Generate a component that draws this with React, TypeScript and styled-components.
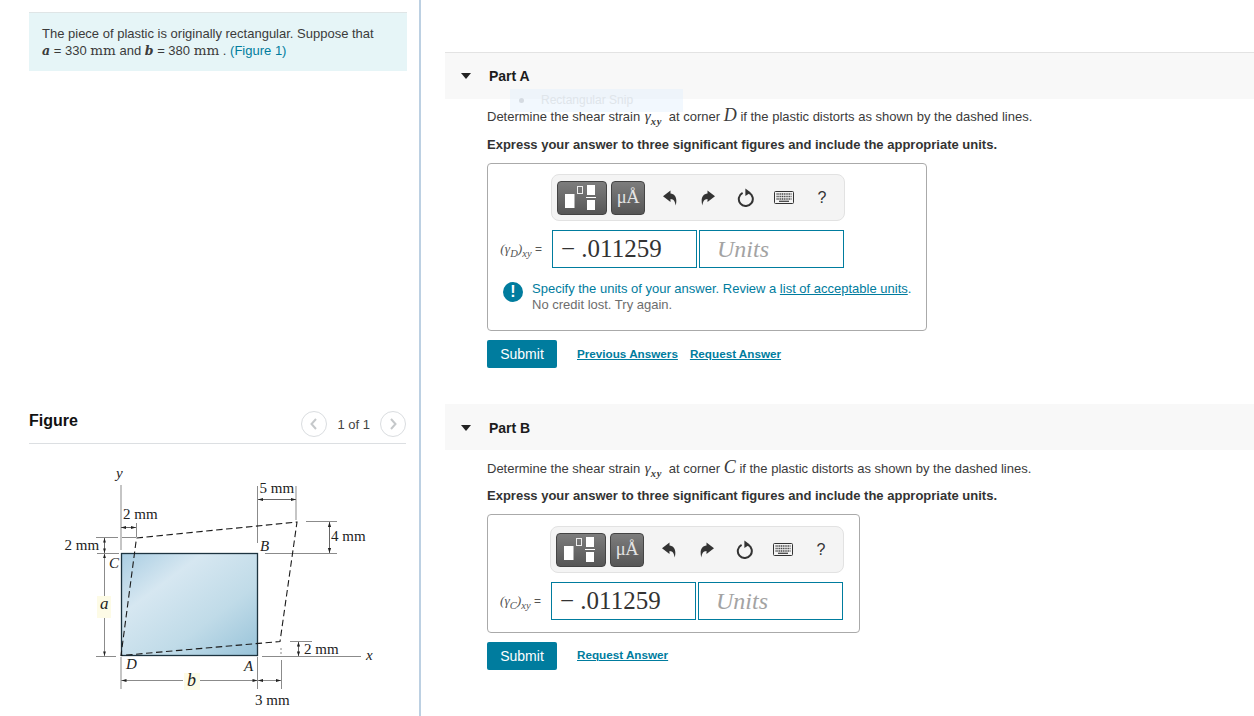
import React from "react";
import styled, { createGlobalStyle } from "styled-components";

const Global = createGlobalStyle`
  html, body { margin: 0; padding: 0; background: #fff; }
  body { font-family: "Liberation Sans", Arial, sans-serif; font-size: 13px; color: #333; overflow: hidden; }
`;

const Page = styled.div`
  position: relative;
  display: flex;
  width: 1254px;
  height: 716px;
  overflow: hidden;
`;
const LeftPane = styled.div`
  width: 421px;
  height: 716px;
  flex: none;
  padding-top: 12px;
  box-sizing: border-box;
  border-right: 2px solid #bcd0e2;
`;
const Intro = styled.div`
  margin: 0 12px 0 29px;
  height: 59px;
  box-sizing: border-box;
  padding: 13px 13px 0;
  background: #e6f5f7;
  border-top: 1px solid #dfe5e6;
  font-size: 13px;
  line-height: 16px;
  color: #3b3b3b;
  white-space: nowrap;
`;
const MathI = styled.i`
  font-family: "DejaVu Serif", "Liberation Serif", serif;
  font-weight: 700;
  font-size: 12.5px;
`;
const MathU = styled.span`
  font-family: "DejaVu Serif", "Liberation Serif", serif;
  font-size: 13.5px;
`;
const Link = styled.a`
  color: #007c9e;
`;
const FigureHead = styled.div`
  margin: 333px 13px 0 29px;
  height: 40px;
  box-sizing: border-box;
  border-bottom: 1px solid #dcdfe2;
  display: flex;
  align-items: flex-start;
  justify-content: space-between;
`;
const FigureTitle = styled.div`
  font-size: 16px;
  font-weight: 700;
  color: #111;
  line-height: 33px;
`;
const Pager = styled.div`
  display: flex;
  align-items: center;
  gap: 10px;
  height: 26px;
  margin-top: 7px;
  font-size: 13px;
  color: #444;
`;
const PagerButton = styled.span`
  width: 24px;
  height: 24px;
  border: 1px solid #dadde0;
  border-radius: 50%;
  display: flex;
  align-items: center;
  justify-content: center;
`;
const Figure = styled.svg`
  display: block;
  margin-top: 6px;
  width: 419px;
  height: 266px;
`;

const RightPane = styled.div`
  flex: 1;
  padding: 52px 0 0 24px;
`;
const PartBlock = styled.section<{ $after: number }>`
  margin-bottom: ${(p) => p.$after}px;
`;
const PartHeader = styled.div<{ $line: boolean }>`
  height: ${(p) => (p.$line ? 47 : 46)}px;
  box-sizing: border-box;
  background: #f8f8f8;
  border-top: 1px solid ${(p) => (p.$line ? "#e3e3e3" : "#f8f8f8")};
  display: flex;
  align-items: center;
  padding-left: 16px;
  font-weight: 700;
  font-size: 14px;
  color: #1c1c1c;
`;
const Caret = styled.span`
  width: 0;
  height: 0;
  margin-right: 18px;
  border-left: 5.5px solid transparent;
  border-right: 5.5px solid transparent;
  border-top: 6px solid #222;
`;
const PartBody = styled.div`
  padding-left: 42px;
`;
const Question = styled.div<{ $top: number }>`
  padding-top: ${(p) => p.$top}px;
  height: 20px;
  line-height: 20px;
  font-size: 13px;
  color: #3b3b3b;
  white-space: nowrap;
`;
const Gamma = styled.i`
  font-family: "Liberation Serif", serif;
  font-size: 15px;
  margin: 0 3px 0 1px;
  sub { font-size: 10.5px; font-weight: 700; line-height: 0; letter-spacing: 0.8px; }
`;
const Corner = styled.i`
  font-family: "Liberation Serif", serif;
  font-size: 18px;
`;
const Instruction = styled.div<{ $top: number }>`
  margin-top: ${(p) => p.$top}px;
  height: 20px;
  line-height: 20px;
  font-weight: 700;
  font-size: 13px;
  color: #333;
`;
const AnswerBox = styled.div<{ $w: number; $top: number; $bottom: number }>`
  margin-top: 8px;
  width: ${(p) => p.$w}px;
  box-sizing: border-box;
  border: 1px solid #aaa;
  border-radius: 4px;
  padding: ${(p) => p.$top}px 0 ${(p) => p.$bottom}px;
`;
const Toolbar = styled.div<{ $indent: number }>`
  margin-left: ${(p) => p.$indent}px;
  width: 294px;
  height: 47px;
  box-sizing: border-box;
  background: #f4f4f4;
  border: 1px solid #e2e2e2;
  border-radius: 8px;
  display: flex;
  align-items: center;
  padding-left: 5px;
  gap: 4px;
`;
const ToolButton = styled.span<{ $w: number }>`
  width: ${(p) => p.$w}px;
  height: 34px;
  flex: none;
  box-sizing: border-box;
  background: linear-gradient(#7d7d7d, #565656);
  border: 1px solid #444;
  border-radius: 4px;
  display: flex;
  align-items: center;
  justify-content: center;
  color: #e4e4e4;
  font-family: "Liberation Serif", serif;
  font-size: 18.5px;
  letter-spacing: -0.5px;
`;
const ToolIcons = styled.div`
  display: flex;
  margin-left: 2px;
`;
const ToolIcon = styled.span`
  width: 38px;
  display: flex;
  align-items: center;
  justify-content: center;
  font-size: 16px;
  color: #333;
`;
const EqRow = styled.div`
  display: flex;
  align-items: center;
  margin-top: 9px;
`;
const EqLabel = styled.span<{ $w: number }>`
  width: ${(p) => p.$w}px;
  box-sizing: border-box;
  padding-right: 10px;
  text-align: right;
  flex: none;
  font-family: "Liberation Serif", serif;
  font-style: italic;
  font-size: 13.5px;
  color: #555;
  white-space: nowrap;
  sub { font-size: 10.5px; line-height: 0; }
  b { font-family: "Liberation Sans", sans-serif; font-size: 12px; font-style: normal; font-weight: 400; }
`;
const Field = styled.div<{ $empty?: boolean }>`
  width: 145px;
  height: 38px;
  box-sizing: border-box;
  border: 1px solid #007c9e;
  margin-right: 2px;
  display: flex;
  align-items: center;
  padding-left: ${(p) => (p.$empty ? 17 : 8)}px;
  font-family: "Liberation Serif", serif;
  font-size: ${(p) => (p.$empty ? 24 : 25)}px;
  font-style: ${(p) => (p.$empty ? "italic" : "normal")};
  color: ${(p) => (p.$empty ? "#a3a3a3" : "#333")};
  white-space: pre;
`;
const Feedback = styled.div`
  display: flex;
  margin: 13px 0 0 15px;
  line-height: 16px;
  font-size: 13px;
  white-space: nowrap;
`;
const AlertDot = styled.span`
  width: 20px;
  height: 20px;
  flex: none;
  margin: 1px 9px 0 0;
  border-radius: 50%;
  background: #007c9e;
  color: #fff;
  font-weight: 700;
  font-size: 16px;
  line-height: 20px;
  text-align: center;
`;
const FeedbackMain = styled.div`
  color: #007c9e;
  a { color: #007c9e; text-decoration: underline; }
`;
const FeedbackSub = styled.div`
  color: #6d6d6d;
`;
const Actions = styled.div`
  display: flex;
  margin-top: 9px;
  align-items: flex-start;
`;
const Submit = styled.button`
  width: 70px;
  height: 28px;
  border: 0;
  border-radius: 2px;
  background: #007c9e;
  color: #fff;
  font: 400 14px "Liberation Sans", sans-serif;
  padding: 0;
`;
const ActionLinks = styled.div<{ $top: number }>`
  display: flex;
  gap: 12px;
  margin: ${(p) => p.$top}px 0 0 20px;
  line-height: 14px;
  font-size: 11.7px;
  font-weight: 700;
  a { color: #007c9e; text-decoration: underline; }
`;
const Ghost = styled.div`
  position: absolute;
  left: 510px;
  top: 89px;
  width: 173px;
  height: 23px;
  box-sizing: border-box;
  padding-left: 31px;
  background: rgba(226, 240, 253, 0.45);
  color: #dfe5ea;
  font-size: 12px;
  line-height: 22px;
  &::before {
    content: "";
    position: absolute;
    left: 9px;
    top: 9px;
    width: 5px;
    height: 5px;
    border-radius: 50%;
    background: #d5dbe2;
  }
`;

const Chevron = ({ d }: { d: string }) => (
  <svg width="10" height="14" viewBox="0 0 10 14" fill="none" stroke="#c5c8ca" strokeWidth="2">
    <path d={d} />
  </svg>
);

const TemplateGlyph = () => (
  <svg width="48" height="32" viewBox="1 1 48 32">
    <rect x="8" y="13" width="9.5" height="14" fill="#fff" />
    <rect x="20.5" y="5.5" width="5" height="7" fill="none" stroke="#eee" strokeWidth="1" />
    <rect x="30" y="4" width="8" height="10" fill="#fff" />
    <rect x="29" y="16" width="10" height="1" fill="#fff" />
    <rect x="30" y="19" width="8" height="10" fill="#fff" />
  </svg>
);
const Undo = ({ flip }: { flip?: boolean }) => (
  <svg width="14" height="16" viewBox="0 0 14 16" transform={flip ? "scale(-1 1)" : undefined} fill="#333">
    <path d="M0 6.2 L7.5 0.5 V3.6 C12.5 4 14.6 9 12.6 15.5 C12 11.5 11 9.2 7.5 9 V12 Z" />
  </svg>
);
const Reload = () => (
  <svg width="18" height="19" viewBox="0 0 18 19" fill="none">
    <path d="M11.6 4.6 A7 7 0 1 1 5.6 4.8" stroke="#333" strokeWidth="2" />
    <path d="M8.4 0.6 L13.8 4.6 L8.4 8 Z" fill="#333" />
  </svg>
);
const Keyboard = () => (
  <svg width="20" height="13" viewBox="0 0 20 13">
    <rect x="0.5" y="0.5" width="19" height="12" rx="1" fill="#f4f4f4" stroke="#333" />
    <path d="M2.5 3h15M2.5 5.5h15M2.5 8h15" stroke="#444" strokeWidth="1.3" strokeDasharray="1.2 .6" />
    <path d="M5 10.3h10" stroke="#444" strokeWidth="1.3" />
  </svg>
);

const Tools = ({ indent }: { indent: number }) => (
  <Toolbar $indent={indent}>
    <ToolButton $w={50}><TemplateGlyph /></ToolButton>
    <ToolButton $w={34}>μÅ</ToolButton>
    <ToolIcons>
      <ToolIcon><Undo /></ToolIcon>
      <ToolIcon><Undo flip /></ToolIcon>
      <ToolIcon><Reload /></ToolIcon>
      <ToolIcon><Keyboard /></ToolIcon>
      <ToolIcon>?</ToolIcon>
    </ToolIcons>
  </Toolbar>
);

const Arrow = ({ d }: { d: string }) => <path d={d} fill="#222" />;

const Diagram = () => (
  <Figure viewBox="0 450 419 266">
    <defs>
      <linearGradient id="plate" x1="0" y1="0" x2="1" y2="1">
        <stop offset="0" stopColor="#a9cde2" />
        <stop offset="0.3" stopColor="#d6e7f1" />
        <stop offset="0.65" stopColor="#c0dbe8" />
        <stop offset="1" stopColor="#98c3d9" />
      </linearGradient>
    </defs>
    <rect x="121.5" y="553.5" width="136" height="102" fill="url(#plate)" stroke="#1d3440" strokeWidth="1.3" />
    <g stroke="#8b8b8b" strokeWidth="1" fill="none">
      <path d="M121 485V550M121 657V689M257.5 486V543M296 486V520M136.5 523V537" />
      <path d="M257.5 657V689M281.5 660V689M96 537.5H118M122 537.5H136M97 553.5H119M96 656.5H116" />
      <path d="M306 521.5H337M265 553.5H337M262 656.5H361M290 641.5H312" />
      <path d="M104.5 553V597M104.5 618V656M121 680.5H183M200 680.5H281" />
      <path d="M258 499.5H296M121 527.5H136M329.5 522V553M298.5 642V656M104.5 538V553" stroke="#666" />
    </g>
    <g stroke="#1b1b1b" strokeWidth="1.1" fill="none" strokeDasharray="6.5 3.5">
      <path d="M136.5 538L297 522L280 641.5L121 655.5L136.5 538" />
    </g>
    <path d="M281 648V654" stroke="#888" strokeDasharray="2 2" />
    <g>
      <Arrow d="M258 499.5l5-1.6v3.2zM296 499.5l-5-1.6v3.2zM121 527.5l5-1.6v3.2zM136 527.5l-5-1.6v3.2z" />
      <Arrow d="M329.5 522l-1.6 5h3.2zM329.5 553l-1.6-5h3.2zM298.5 642l-1.6 4.5h3.2zM298.5 656l-1.6-4.5h3.2z" />
      <Arrow d="M104.5 538l-1.4 4.5h2.8zM104.5 553l-1.4-4.5h2.8zM104.5 553.5l-1.4 4.5h2.8zM104.5 656l-1.4-4.5h2.8z" />
      <Arrow d="M121.5 680.5l5-1.6v3.2zM257.5 680.5l-5-1.6v3.2zM258 680.5l5-1.6v3.2zM281 680.5l-5-1.6v3.2z" />
    </g>
    <rect x="97" y="596" width="14" height="22" fill="#fdfbe6" />
    <rect x="184" y="673" width="16" height="17" fill="#fdfbe6" />
    <g fontFamily="'Liberation Serif', serif" fontSize="15" fill="#222">
      <text x="259.5" y="493">5 mm</text>
      <text x="123" y="519">2 mm</text>
      <text x="64.5" y="550">2 mm</text>
      <text x="331" y="541">4 mm</text>
      <text x="304" y="654">2 mm</text>
      <text x="255" y="705">3 mm</text>
    </g>
    <g fontFamily="'Liberation Serif', serif" fontSize="15" fontStyle="italic" fill="#222">
      <text x="116" y="478">y</text>
      <text x="260" y="550.5">B</text>
      <text x="109" y="567.5">C</text>
      <text x="126" y="668.5">D</text>
      <text x="244" y="670.5">A</text>
      <text x="366" y="660">x</text>
      <text x="100" y="609" fontSize="17">a</text>
      <text x="187" y="686" fontSize="18">b</text>
    </g>
  </Figure>
);

export default function App() {
  return (
    <Page>
      <Global />
      <LeftPane>
        <Intro>
          The piece of plastic is originally rectangular. Suppose that
          <br />
          <MathI>a</MathI> = 330 <MathU>mm</MathU> and <MathI>b</MathI> = 380 <MathU>mm</MathU> . <Link>(Figure 1)</Link>
        </Intro>
        <FigureHead>
          <FigureTitle>Figure</FigureTitle>
          <Pager>
            <PagerButton><Chevron d="M7 2L2.5 7L7 12" /></PagerButton>
            <span>1 of 1</span>
            <PagerButton><Chevron d="M3 2L7.5 7L3 12" /></PagerButton>
          </Pager>
        </FigureHead>
        <Diagram />
      </LeftPane>
      <RightPane>
        <PartBlock $after={36}>
          <PartHeader $line><Caret />Part A</PartHeader>
          <PartBody>
            <Question $top={6}>
              Determine the shear strain <Gamma>γ<sub>xy</sub></Gamma> at corner <Corner>D</Corner> if the plastic distorts as shown by the dashed lines.
            </Question>
            <Instruction $top={10}>Express your answer to three significant figures and include the appropriate units.</Instruction>
            <AnswerBox $w={440} $top={10} $bottom={17}>
              <Tools indent={63} />
              <EqRow>
                <EqLabel $w={64}>(γ<sub>D</sub>)<sub>xy</sub> <b>=</b></EqLabel>
                <Field>{"− .011259"}</Field>
                <Field $empty>Units</Field>
              </EqRow>
              <Feedback>
                <AlertDot>!</AlertDot>
                <div>
                  <FeedbackMain>Specify the units of your answer. Review a <a>list of acceptable units</a>.</FeedbackMain>
                  <FeedbackSub>No credit lost. Try again.</FeedbackSub>
                </div>
              </Feedback>
            </AnswerBox>
            <Actions>
              <Submit>Submit</Submit>
              <ActionLinks $top={7}><a>Previous Answers</a><a>Request Answer</a></ActionLinks>
            </Actions>
          </PartBody>
        </PartBlock>
        <PartBlock $after={0}>
          <PartHeader $line={false}><Caret />Part B</PartHeader>
          <PartBody>
            <Question $top={7}>
              Determine the shear strain <Gamma>γ<sub>xy</sub></Gamma> at corner <Corner>C</Corner> if the plastic distorts as shown by the dashed lines.
            </Question>
            <Instruction $top={9}>Express your answer to three significant figures and include the appropriate units.</Instruction>
            <AnswerBox $w={373} $top={11} $bottom={12}>
              <Tools indent={62} />
              <EqRow>
                <EqLabel $w={63}>(γ<sub>C</sub>)<sub>xy</sub> <b>=</b></EqLabel>
                <Field>{"− .011259"}</Field>
                <Field $empty>Units</Field>
              </EqRow>
            </AnswerBox>
            <Actions>
              <Submit>Submit</Submit>
              <ActionLinks $top={6}><a>Request Answer</a></ActionLinks>
            </Actions>
          </PartBody>
        </PartBlock>
      </RightPane>
      <Ghost>Rectangular Snip</Ghost>
    </Page>
  );
}
